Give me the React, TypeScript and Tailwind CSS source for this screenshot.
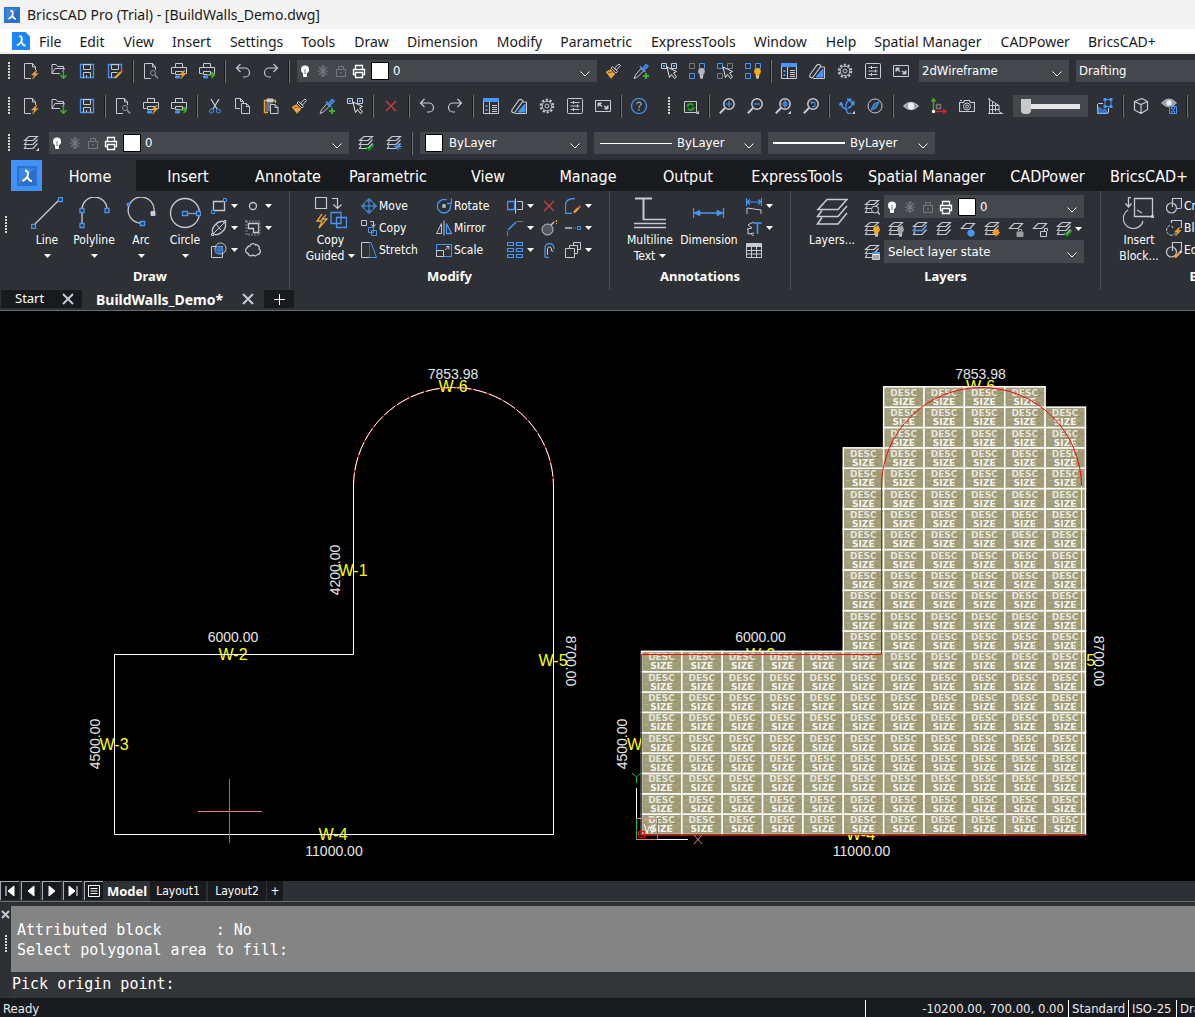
import { ReactNode } from 'react';

const G = '#c5cad3';
const B = '#4795f7';
const O = '#eaa53a';
const GREEN = '#43b02a';
const DIM = '#75797f';

type PathProps = { d: string; c?: string; f?: string; w?: number; dash?: string };

const P = ({ d, c = G, f = 'none', w = 1, dash }: PathProps) => (
  <path d={d} stroke={c} fill={f} strokeWidth={w} strokeDasharray={dash} />
);

/* Shared icon parts */
const Bolt = () => <P d="M13 7.5L8.5 12h3l-2 4 5.500-5.500h-3l2-3z" c={O} f={O} w={0.5} />;
const Page = () => <P d="M8 15.5H1.5V.5h8l3 3.5v3M9.5.5V4h3" />;
const Stack = () => (
  <>
    <P d="M6 1.5h8.5l-4.5 4H1.5z" w={1.2} />
    <P d="M3.5 6.5L1.5 9.5H10l4.5-5" w={1.2} />
    <P d="M3 10.5l-1.5 3H10l4.5-5" w={1.2} />
  </>
);
const Sheet = () => <P d="M6 2.5h8.5l-4.5 5H1.5z" w={1.2} />;
const Printer = () => (
  <>
    <P d="M4.5 5V.5h7V5M3.5 10.5h-3v-6h15v6h-3" />
    <P d="M4.5 8.5h7v3h-7z" />
    <P d="M4.5 13h4v2h-4z" c={B} f={B} />
  </>
);
const Lens = () => (
  <>
    <circle cx="10" cy="6" r="5.2" stroke={G} strokeWidth="1.5" />
    <P d="M6 10L.8 15.2" w={2} />
  </>
);
const Nodes = ({ a = B, b = B }: { a?: string; b?: string }) => (
  <>
    <P d="M.5.5h5v5h-5z" c={a} />
    <P d="M10.5.5h5v5h-5z" c={b} />
  </>
);
const Bulb = ({ c }: { c: string }) => (
  <>
    <circle cx="12.5" cy="8.5" r="3.3" fill={c} />
    <P d="M11 10h3v4h-3z" c={c} f={c} w={0.5} />
    <P d="M11.5 13h2v2.5h-2z" c={G} f={G} w={0.5} />
  </>
);
const Cursor = () => <P d="M6 4l2.500 10.500 2-3 3 4 2-1.500-3-4 3-1.500z" c="#e4e6ea" f="#2d3035" />;

const icons: Record<string, ReactNode> = {
  newDoc: <><Page /><Bolt /></>,
  open: (
    <>
      <P d="M1 10.5V1.5h4l1.5 2h6v2M1 10.5l3-5h9.5l-2 3M1 10.5h8" />
      <P d="M12.5 7v8M9.5 12l3 3.5 3-3.5" c={GREEN} w={1.3} />
    </>
  ),
  save: (
    <>
      <P d="M1.5 1.5h13v13h-13z" c={B} w={1.3} />
      <P d="M4.5 1.5h7v5h-7zM4.5 14.5v-5h7v5M7.5 12v2" />
    </>
  ),
  saveAs: (
    <>
      <P d="M8 14.5H1.5v-13h13V8" c={B} w={1.3} />
      <P d="M4.5 1.5h7v5h-7zM4.5 14.5v-5h6" />
      <P d="M8 15l6-6" c={O} w={2.3} />
      <P d="M14 9l1.5-1.5" c="#c8503c" w={2.3} />
    </>
  ),
  preview: <><Page /><circle cx="10" cy="10" r="2.5" stroke="#8d9198" /><P d="M12 12l3 3.5" c="#8d9198" w={1.5} /></>,
  printer: <><Printer /><Bolt /></>,
  publish: <><Printer /><P d="M8 12h7M12.5 9l3 3-3 3" c={GREEN} w={1.4} /></>,
  undo: <P d="M5.5 1L1.5 5l4 4M1.5 5H10a4.5 4.5 0 010 9H8" w={1.2} />,
  redo: <P d="M10.5 1l4 4-4 4M14.5 5H6a4.5 4.5 0 000 9h2" w={1.2} />,
  brush: (
    <>
      <P d="M14 1l1.500 1.500-4 4.500-2-2z" />
      <P d="M7.5 3.500l5 5-1.500 1.500-5-5z" f="#2d3035" />
      <P d="M5.5 6.5l4.500 4.5-4 4.5L1 9z" c={O} f={O} w={0.5} />
      <P d="M3 9.500l5-.5" c="#8a5a14" />
    </>
  ),
  dropper: (
    <>
      <P d="M8 5.500l2.500 2.500-6 6-3.500 1.500 1.500-3.500z" />
      <P d="M7 3.500l5.500 5.500" c={B} w={1.6} />
      <P d="M9.500 5.500l2.500-3.500q1-1.500 2.500 0t0 2.500l-3.500 2.500z" c={B} f="#3b78c9" />
      <P d="M13 10v6M10 13h6" c={GREEN} w={2} />
    </>
  ),
  selectSimilar: <><Nodes a={G} b={G} /><P d="M3 2v2M13 2v2" c={B} w={2} /><Cursor /></>,
  isolate: <><Nodes a="#75797f" b={B} /><P d="M.5 10.5h5v5h-5z" c={B} /><Bulb c="#b4b6ba" /></>,
  quickSelect: <><Nodes a={B} b="#75797f" /><P d="M.5 10.5h5v5h-5z" c={DIM} /><Cursor /></>,
  unisolate: <><Nodes /><P d="M.5 10.5h5v5h-5z" c={B} /><Bulb c="#fba81b" /></>,
  propsPanel: (
    <>
      <P d="M.5.5h15v15H.5z" />
      <P d="M.5.5h15v3H.5z" c={B} f={B} />
      <P d="M6.5 4v11" />
      <P d="M9 7.5h5M9 9.5h5M9 11.5h5M9 13.5h5" />
      <P d="M2.5 8h2M2.5 12h2" c={B} w={2} />
    </>
  ),
  sheetSet: (
    <>
      <P d="M1.500 14.500q-1.500-1.500 0-3.500l6.500-9q2-1.500 4 1l-7.500 10.500q-1.500 2-3 1z" w={1.2} />
      <P d="M12 4h3.5v11.5H4" />
      <P d="M14 6v8H7z" c={B} f={B} />
    </>
  ),
  gear: (
    <>
      <circle cx="8" cy="8" r="6.3" stroke={G} strokeWidth="2" strokeDasharray="2.2 1.75" />
      <circle cx="8" cy="8" r="4.8" stroke={G} />
      <circle cx="8" cy="8" r="2" stroke={G} />
    </>
  ),
  sliders: (
    <>
      <rect x=".5" y=".5" width="15" height="15" rx="1" stroke={G} />
      <P d="M3.5 4.5h9M3.5 8h9M3.5 11.5h9M6.5 3v3M10.5 6.5v3M6.5 10v3" />
    </>
  ),
  fullscreen: (
    <>
      <P d="M.5 2.5h15v11H.5z" />
      <P d="M3 5h3.5L3 8.5zM13 11H9.5L13 7.5z" f={G} />
      <P d="M4 6l3 2.5M12 10l-3-2" w={1.5} />
    </>
  ),
  cut: (
    <>
      <P d="M4 1l6 10M12 1L6 11" w={1.3} />
      <circle cx="4.5" cy="13" r="2" stroke={B} />
      <circle cx="11.5" cy="13" r="2" stroke={B} />
    </>
  ),
  copy: <P d="M5 10.5H.5V.5h5l3 3V5M6.5 5.5h5l3 3v7h-8zM5.5.5v3h3M11.5 5.5v3h3" />,
  paste: (
    <>
      <P d="M5 14.5H1.5v-12h11V5" c={O} w={1.4} />
      <P d="M4 1h6v3H4z" f={G} />
      <P d="M3 5h5v8H3z" c="#6d7075" f="#6d7075" />
      <P d="M7.5 6.5h4.5l3 3v6H7.5zM12 6.5v3h3" f="#2d3035" />
    </>
  ),
  erase: <P d="M3 3l10 10M13 3L3 13" c="#c9404a" w={1.3} />,
  help: (
    <>
      <circle cx="8" cy="8" r="7.5" stroke={B} strokeWidth="1.2" />
      <P d="M5.8 6.2q0-2.2 2.2-2.2t2.2 2Q10.2 7.2 8 8.5v1.3M8 11v1.5" />
    </>
  ),
  regen: (
    <>
      <P d="M1.5 3.5h12v11h-12z" />
      <circle cx="7.5" cy="9" r="3" stroke="#1fa81f" strokeWidth="2.2" strokeDasharray="7.4 2" />
      <P d="M16 13v3h-3z" f={G} w={0.5} />
    </>
  ),
  zoomIn: <><Lens /><P d="M10 3v6M7 6h6" c={B} w={1.2} /></>,
  zoomOut: <><Lens /><P d="M7 6h6" c={B} w={1.2} /></>,
  zoomExtents: <><Lens /><P d="M10 2v8M6 6h8M8 4.5h4M8 7.5h4" c={B} w={1.2} /><P d="M16 13v3h-3z" f={G} w={0.5} /></>,
  zoomPrev: <><Lens /><P d="M9 8.5h3V4.5H8M9.5 3L8 4.5 9.5 6" c={B} /></>,
  orbit: (
    <>
      <P d="M2 5q0 5 6.5 6.5M10 2q-4 3-3 9t5 4M9 10q4-1 5.5-6" c={B} w={1.3} />
      <P d="M0 7l2-3 2 3zM8 1h4v3zM12 5l3-2v4z" c={B} f={B} />
      <P d="M16 13v3h-3z" f={G} w={0.5} />
    </>
  ),
  compass: <><circle cx="8" cy="8" r="7" stroke={G} /><P d="M12 4L9 10 4 12l3-6z" c={B} f="#356db3" /></>,
  eye: <><P d="M.5 8Q8 .5 15.5 8 8 15.5.5 8z" f="#9a9ea6" /><circle cx="8" cy="8" r="3.2" fill="#eceef2" /></>,
  ucs: (
    <>
      <P d="M2.5 13V1M.5 3.5l2-3 2 3" c={GREEN} w={1.4} />
      <P d="M3 13.5h11M12 11.5l3 2-3 2" c="#d8232a" w={1.4} />
      <P d="M5.5 6.5h4v4h-4z" c={DIM} w={1.5} />
      <P d="M1.5 12.5h2v2h-2z" c="#fff" f="#fff" />
    </>
  ),
  camera: (
    <>
      <P d="M.5 4.5h4l1-2h5l1 2h4v9H.5zM1 2.5h2" w={1.2} />
      <circle cx="8" cy="8.5" r="3.5" stroke={G} />
      <circle cx="8" cy="8.5" r="1.5" stroke={G} />
    </>
  ),
  perspective: <P d="M2.5.5v15M1 .5l11 7v6M1 15.5h15M3 11.5h9.5M3 7.5h9M5.5 3v12M8.5 5v8.5M12 13.5l3 2" />,
  render: (
    <>
      <P d="M6 5.5H1.500l-1 1v9h10l1-1V10" />
      <P d="M1 9.500l3 1 2 2 2-1.5 3 4H1z" c={B} f="#356db3" />
      <P d="M8 1.5h6v7H8z" c={B} />
      <P d="M6.500 1.500h3M12.500 1.500h3M6.500 8.500h3M12.500 8.500h3" c={B} w={3} />
    </>
  ),
  box: <P d="M1.5 3.5L9 .5l5.5 3v8L8 15.5l-6.5-3.5zM1.5 3.5L8 6.5l6.5-3M8 6.5v9" w={1.2} />,
  viewSave: (
    <>
      <P d="M.5 5Q8-3 15.5 5 8 13 .5 5z" c="#aeb2b9" f="#9a9ea6" />
      <circle cx="8" cy="5" r="2.8" fill="#eceef2" />
      <P d="M8.5 8.5h7v7h-7zM10.5 8.5v2.5h3V8.5M10.5 15.5V13h3v2.5" c={B} f="#2d3035" />
    </>
  ),
  layers: <><Stack /><P d="M16 13v3h-3z" f={G} w={0.5} /></>,
  layersPlain: <Stack />,
  layersCheck: <><Stack /><P d="M8 12l3 2.5 5-5" c="#12a012" w={1.8} /></>,
  layersBlue: <><Stack /><P d="M12 7.5v8M8 11.5h8M9.5 9l5 5M14.5 9l-5 5" c={B} /></>,
  layersSearch: <><Stack /><circle cx="11" cy="10.5" r="3.5" stroke={G} fill="#2d3035" /><P d="M13.5 13l2.5 2.5" w={1.5} /></>,
  layersOn: <><Stack /><Bulb c="#fba81b" /></>,
  layersOff: <><Stack /><Bulb c="#a2a4a8" /></>,
  layersIso: <><Stack /><P d="M3.5 6.5L1.5 9.5H10l4.5-5" c={B} w={1.5} /></>,
  layersFreeze: <><Sheet /><circle cx="11" cy="12" r="3.5" fill={B} /><P d="M11 8v8M7 12h8" c={B} /></>,
  layersSun: <><Stack /><circle cx="12" cy="11.5" r="3" fill="#fba81b" /><P d="M12 7.5v8M8 11.5h8" c="#f28c1b" /></>,
  layersLock: <><Sheet /><P d="M9 11h6v4.5H9z" c="#9a9ea6" f="#9a9ea6" /><P d="M10.5 10.5V8.5h3v2" c="#9a9ea6" /></>,
  layersUnlock: <><Sheet /><P d="M8.5 10.5h6v5h-6zM12.5 10V7.5h3V10" /></>,
  layersStates: <><Stack /><P d="M8.5 8.5h7v7h-7z" f="#fff" c={G} /><P d="M8 9h8" c={B} w={2} /><P d="M9 12h6M9 14h6" c="#555" /></>,
  rect: <><P d="M2.5 3.5h11v9h-11z" w={1.3} /><P d="M.5 12.5h3v3h-3zM12.5.5h3v3h-3z" c={B} f="#2d3035" /></>,
  point: <circle cx="8" cy="8" r="3.5" stroke={G} strokeWidth="1.3" />,
  ellipse: (
    <>
      <ellipse cx="8" cy="8" rx="8" ry="5" transform="rotate(-45 8 8)" stroke={G} strokeWidth="1.3" />
      <P d="M3 13L13 3M5 4l5 6" />
      <P d="M.5 13.5h2v2h-2zM13 .5h2v2h-2z" />
    </>
  ),
  boundary: (
    <>
      <P d="M3.5 3.5h10v9h-5v-4h-5z" w={1.3} />
      <P d="M1.5 1.5h13v13h-13z" dash="1 2" w={2.5} c="#8d9198" />
    </>
  ),
  hatch: (
    <>
      <P d="M.5 4.5h11v11H.5z" />
      <circle cx="9.5" cy="6.5" r="5.5" stroke={G} />
      <circle cx="8" cy="8" r="4" stroke={B} fill="#2f5c96" />
      <P d="M5.5 9L9 5M7 11l4-5" c={B} />
    </>
  ),
  cloud: <P d="M5 4a3 3 0 015.5-1A3 3 0 0114 7a3 3 0 01-1.5 5.5A3 3 0 018 13a3 3 0 01-5-1.5A3 3 0 012 6a3 3 0 013-2z" w={1.3} />,
  move: <P d="M8 .5L15.5 8 8 15.5.5 8zM8 .5v15M.5 8h15M5.5 3h5M5.5 13h5M3 5.5v5M13 5.5v5" c={B} />,
  copySmall: (
    <>
      <P d="M.5.5h5v5h-5zM9 1.5h3.5v5M10.5 4.5l2 2.5 2-2.5" />
      <P d="M7.5 7.5h5v5h-5zM10.5 10.5h5v5h-5z" c={B} />
    </>
  ),
  stretch: <><P d="M8.5.5h-8v15h8" /><P d="M8.5.5v15" dash="1 1" c={B} /><P d="M8.5.5h1.5l5.5 15h-7" c={B} /></>,
  rotate: <><P d="M11 2A6.8 6.8 0 108 15a6.8 6.8 0 006.5-8M11 5.5h4.5v-5" c={B} w={1.3} /><P d="M7 7h2v2H7z" w={1.3} /></>,
  mirror: <><P d="M5.5 3.5v10h-5zM8 .5v15" /><P d="M10.5 3.5v10h5z" c={B} w={1.3} /></>,
  scale: <><P d="M.5 2.5h15v12H.5z" c={B} /><P d="M.5 8.5h7v6h-7zM9 8l4-3.5M10 4.5h3v3" /></>,
  trim: <><P d="M10 3.5h5.5v8H10" /><P d="M7.5 3.5h-7v8h7z" c={B} w={1.3} /><P d="M8.5.5v15" /></>,
  chamfer: <><P d="M.5 16v-5M10 1.5h6" c={DIM} /><P d="M1 10l8-8" c={B} w={1.5} /></>,
  array: <P d="M.5.5h6v3h-6zM9.5.5h6v3h-6zM.5 6.5h6v3h-6zM9.5 6.5h6v3h-6zM.5 12.5h6v3h-6zM9.5 12.5h6v3h-6z" c={B} w={1.2} />,
  explode: <><circle cx="6.5" cy="9.5" r="5.5" stroke={G} fill="#55585c" /><P d="M10 5l3-3" w={1.5} /><P d="M13 .5l1 1M15.5 0v2M15 3.5h1" c={O} /></>,
  offset: <><P d="M4 15.5V6a4.5 4.5 0 019 0v1M8 15.5H4" c={B} w={1.3} /><P d="M6.5 13V7a2 2 0 014 0v2h2" /></>,
  fillet: <><P d="M.5 15.5V7Q.5.5 10 .5M.5 15.5H7" c={B} w={1.3} /><P d="M9 14.5l4.5-4.5" c={O} w={2.3} /><P d="M13.5 10L15.5 8" c="#c8503c" w={2.3} /></>,
  lengthen: <><P d="M0 8h7" w={1.4} /><P d="M8 8h4" c={B} dash="1 1" /><P d="M12.5 6.5h3v3h-3z" c={B} /></>,
  draworder: <P d="M.5 6.5h9v9h-9zM4.5 6V3.5h8v8H10M8.5 3V.5h7v7H13" />,
  dimStyle: <><P d="M.5 0v8M15.5 0v8M1 4h14M4 1.5L1 4l3 2.5M12 1.5L15 4l-3 2.5" c={B} w={1.2} /><P d="M1 16v-6l14 2v4" /></>,
  textStyle: <><P d="M7 3h8.5M11.5 3v11" c={B} w={1.6} /><P d="M7 2L2 5l4 3M1 9l5-1M2 9v5l6-1M5 14l3 2" /></>,
  table: <><P d="M.5 1.5h15v14H.5zM.5 8.5h15M.5 12h15M5.5 5v10M10.5 5v10" /><P d="M1 1.5h14v3H1z" f={G} /></>,
  blockCreate: <><P d="M6.5 9V.5h9v10H11" w={1.2} /><circle cx="5.5" cy="10" r="5" stroke={G} strokeWidth="1.2" /><P d="M15 10v1" c={B} w={2} /></>,
  blockBolt: <><P d="M5.5 3V.5h10V8" w={1.2} /><P d="M4 5.5a5 5 0 106 7M7 8l-1-2" dash="3 1" /><Bolt /></>,
  blockEdit: <><P d="M6.5 9V.5h9v8" w={1.2} /><circle cx="5.5" cy="10" r="5" stroke={G} strokeWidth="1.2" /><P d="M9 15.5l5-5" c={O} w={2.3} /><P d="M14 10.5l1.5-1.5" c="#fff" w={2.3} /></>,
  bulb: <><circle cx="8" cy="6.5" r="4" fill="#fff" /><P d="M6.5 9h3v4.5h-3z" c="#fff" f="#fff" /><P d="M8 6v5" c="#777" /></>,
  snow: <P d="M2.5 8h11M8 2.5v11M4 4l8 8M12 4l-8 8M6.5 3L8 4.5 9.5 3M6.5 13L8 11.5 9.5 13" c={DIM} w={1.2} />,
  lock: <P d="M3.5 6.5h9v7h-9zM5.5 6V3.5h5V6M8 9v2" c={DIM} />,
  plotter: <P d="M4.5 6V2.5h7V6M4 11.5H2.5v-5h11v5H12M4.5 9.5h7v5h-7z" c="#fff" w={1.3} />,
};

/* 32px ribbon icons */
const bigIcons: Record<string, ReactNode> = {
  line: <><P d="M3 28L28 3" w={1.3} /><P d="M.5 27.5h4v4h-4zM27.5.5h4v4h-4z" c={B} w={1.3} f="#2d3035" /></>,
  polyline: <><P d="M4 27V13a12.5 12.5 0 0125-1" w={1.3} /><P d="M2 11.5h4v4H2zM2 26.5h4v4H2zM27 11.5h4v4h-4z" c={B} w={1.3} f="#2d3035" /></>,
  arc: <><P d="M17 26A13 13 0 1129 15" w={1.3} /><P d="M2.5 6.5h2v2h-2zM15.5 24.5h4v4h-4z" c={B} w={1.5} f="#2d3035" /><P d="M26 14.5h4v4h-4z" f={G} /></>,
  circle: <><circle cx="16" cy="16" r="14.5" stroke={G} strokeWidth="1.3" /><P d="M18 16.5h10" c="#8d9198" w={1.5} /><P d="M13.5 14.5h5v4h-5zM27.5 14.5h4v4h-4z" c={B} w={1.3} f="#2d3035" /></>,
  copyGuided: (
    <>
      <P d="M.5.5h11v11H.5zM17 1.5h5.5V11M18.5 7.5l4 4 4-4" w={1.2} />
      <P d="M16 15.5h10v11H16zM21.5 20.5h10v10h-10z" c={B} w={1.3} />
      <P d="M7 17L2 24h5l-3 7 8-9H7l4-4" c={O} w={1.3} />
    </>
  ),
  mtext: <><P d="M1 1.5h17M9.5 1v22" w={2} /><P d="M9 22.5h23M0 26.5h32M0 30.5h32" w={1.3} /></>,
  dimension: <><P d="M.5 11v10M30.5 11v10M1 16h29" c={B} w={1.3} /><P d="M1 16l6-3v6zM30 16l-6-3v6z" c={B} f={B} w={0.5} /></>,
  layers: (
    <>
      <P d="M11 2.5h20l-9 10H2z" w={1.6} />
      <P d="M6 13.5l-4.5 6H22L31 9" w={1.6} />
      <P d="M6 20.5L1.5 27H22l9-11" w={1.6} />
    </>
  ),
  insert: (
    <>
      <P d="M11.5 1.5h18v18h-18zM8 .5H5.5v9M2.5 6.5l3 3.5 3-3.5" w={1.3} />
      <P d="M5 13a10 10 0 1015 11M14 13l5 3" w={1.2} />
      <P d="M28.5 18.5h2v2h-2z" f={G} />
    </>
  ),
};

const Icon = ({ name }: { name: string }) => (
  <svg width="16" height="16" viewBox="0 0 16 16" fill="none" className="shrink-0" aria-hidden="true">
    {icons[name]}
  </svg>
);

const BigIcon = ({ name }: { name: string }) => (
  <svg width="32" height="32" viewBox="0 0 32 32" fill="none" className="shrink-0" aria-hidden="true">
    {bigIcons[name]}
  </svg>
);

const Caret = () => (
  <svg width="7" height="4" viewBox="0 0 7 4" className="shrink-0" aria-hidden="true">
    <path d="M0 0h7L3.5 4z" fill="#fff" />
  </svg>
);

const CloseIcon = () => (
  <svg width="12" height="12" fill="none" aria-hidden="true">
    <P d="M1 1l10 10M11 1L1 11" w={2} />
  </svg>
);

const Logo = ({ size, doc = false }: { size: number; doc?: boolean }) => (
  <svg width={size} height={size} viewBox="0 0 20 20" className="shrink-0" aria-hidden="true">
    <path d={doc ? 'M0 0h15l5 5v15H0z' : 'M0 0h20v20H0z'} fill={doc ? '#1c86ff' : '#2a72cf'} />
    {!doc && <path d="M2 2h16v16H2z" fill="#3b85de" />}
    {!doc && <path d="M2 18L18 2v16z" fill="#2a6cc6" />}
    <path d="M8 4.5q3 0 3 3.5 0 4-5.5 7M10.5 10.5q1 4.5 4.5 4.5" stroke="#fff" strokeWidth="2" fill="none" />
  </svg>
);

const Dots = () => (
  <div className="h-[18px] w-[2px] bg-[repeating-linear-gradient(#d6d8db_0_2px,transparent_2px_3px)]" />
);

const Handle = () => (
  <div className="flex w-[17px] shrink-0 justify-center">
    <Dots />
  </div>
);

const Separator = () => (
  <div className="flex w-2 shrink-0 justify-center">
    <div className="h-[23px] w-[2px] border-l border-[#1b1d20] bg-[#6d7075]" />
  </div>
);

const Tools = ({ names }: { names: string[] }) => (
  <>
    {names.map((name, i) =>
      name === '|' ? (
        <Separator key={i} />
      ) : (
        <button key={i} aria-label={name} className="flex h-7 w-7 shrink-0 items-center justify-center">
          <Icon name={name} />
        </button>
      )
    )}
  </>
);

type ComboProps = { label: string; value: string; className: string; children?: ReactNode };

const Combo = ({ label, value, className, children }: ComboProps) => (
  <div className={`relative flex shrink-0 items-center bg-[#44474c] text-[13px] text-white ${className}`}>
    {children}
    <select aria-label={label} className="h-full min-w-0 flex-1 appearance-none bg-transparent pr-6 outline-none">
      <option>{value}</option>
    </select>
    <svg width="10" height="6" viewBox="0 0 10 6" fill="none" className="pointer-events-none absolute right-[7px] top-1/2" aria-hidden="true">
      <path d="M.5.5L5 5 9.5.5" stroke="#fff" />
    </svg>
  </div>
);

const LayerCombo = ({ className }: { className: string }) => (
  <Combo label="Current layer" value="0" className={`gap-[2px] ${className}`}>
    <Icon name="bulb" />
    <Icon name="snow" />
    <Icon name="lock" />
    <Icon name="plotter" />
    <span className="mx-[2px] h-[18px] w-[18px] shrink-0 border border-black bg-white" />
  </Combo>
);

const menus = [
  'File', 'Edit', 'View', 'Insert', 'Settings', 'Tools', 'Draw', 'Dimension', 'Modify', 'Parametric',
  'ExpressTools', 'Window', 'Help', 'Spatial Manager', 'CADPower', 'BricsCAD+',
];

const ribbonTabs = [
  { name: 'Insert', width: 'w-[100px]' },
  { name: 'Annotate', width: 'w-[100px]' },
  { name: 'Parametric', width: 'w-[100px]' },
  { name: 'View', width: 'w-[100px]' },
  { name: 'Manage', width: 'w-[100px]' },
  { name: 'Output', width: 'w-[100px]' },
  { name: 'ExpressTools', width: 'w-[118px]' },
  { name: 'Spatial Manager', width: 'w-[141px]' },
  { name: 'CADPower', width: 'w-[101px]' },
  { name: 'BricsCAD+', width: 'w-[102px]' },
];

type BigButtonProps = { icon: string; lines: string[]; width: string; caret?: 'below' | 'inline' };

const BigButton = ({ icon, lines, width, caret }: BigButtonProps) => (
  <button className={`flex shrink-0 flex-col items-center pt-[2px] ${width}`}>
    <BigIcon name={icon} />
    <span className="mt-[3px] block">{lines[0]}</span>
    {lines[1] && (
      <span className="flex items-center gap-1">
        {lines[1]}
        {caret === 'inline' && <Caret />}
      </span>
    )}
    {caret === 'below' && <span className="mt-[6px]"><Caret /></span>}
  </button>
);

type SmallItem = { icon: string; text?: string; caret?: boolean };

const SmallColumn = ({ items, width }: { items: SmallItem[]; width: string }) => (
  <div className={`flex shrink-0 flex-col ${width}`}>
    {items.map(item => (
      <button key={item.icon} aria-label={item.text || item.icon} className="flex h-[22px] items-center">
        <Icon name={item.icon} />
        {item.text && <span className="ml-[2px]">{item.text}</span>}
        {item.caret && <span className="ml-1"><Caret /></span>}
      </button>
    ))}
  </div>
);

type PanelProps = { title: string; className: string; children: ReactNode };

const Panel = ({ title, className, children }: PanelProps) => (
  <section className={`flex shrink-0 flex-col border-r border-[#4b4e53] pt-1 ${className}`}>
    <div className="flex h-[73px] items-start text-[12px] leading-4">{children}</div>
    <h2 className="text-center font-['Noto_Sans'] text-[13px] font-bold leading-4">{title}</h2>
  </section>
);

function Ribbon() {
  return (
    <div className="flex shrink-0 overflow-hidden">
      <div className="flex w-[11px] shrink-0 items-center justify-center">
        <Dots />
      </div>
      <div className="min-w-0 flex-1">
        <nav className="flex h-[31px] overflow-hidden bg-[#191a1e] text-[16px] leading-[33px]">
          <button aria-label="Application menu" className="flex w-[31px] shrink-0 items-center justify-center bg-[#3f92fa]">
            <Logo size={20} />
          </button>
          <button className="mr-[2px] w-[94px] shrink-0 bg-[#2d3035] pl-[2px]">Home</button>
          {ribbonTabs.map(tab => (
            <button key={tab.name} className={`shrink-0 ${tab.width}`}>{tab.name}</button>
          ))}
        </nav>

        <div className="flex h-[99px] overflow-hidden">
          <Panel title="Draw" className="w-[279px]">
            <div className="w-[13px] shrink-0" />
            <BigButton icon="line" lines={['Line']} width="w-[46px]" caret="below" />
            <BigButton icon="polyline" lines={['Polyline']} width="w-[48px]" caret="below" />
            <BigButton icon="arc" lines={['Arc']} width="w-[46px]" caret="below" />
            <BigButton icon="circle" lines={['Circle']} width="w-[42px]" caret="below" />
            <div className="w-[5px] shrink-0" />
            <SmallColumn
              width="w-[34px]"
              items={[{ icon: 'rect', caret: true }, { icon: 'ellipse', caret: true }, { icon: 'hatch', caret: true }]}
            />
            <SmallColumn
              width="w-[34px]"
              items={[{ icon: 'point', caret: true }, { icon: 'boundary', caret: true }, { icon: 'cloud' }]}
            />
          </Panel>

          <Panel title="Modify" className="w-[320px]">
            <div className="w-[10px] shrink-0" />
            <BigButton icon="copyGuided" lines={['Copy', 'Guided']} width="w-[61px]" caret="inline" />
            <SmallColumn
              width="w-[75px]"
              items={[{ icon: 'move', text: 'Move' }, { icon: 'copySmall', text: 'Copy' }, { icon: 'stretch', text: 'Stretch' }]}
            />
            <SmallColumn
              width="w-[71px]"
              items={[{ icon: 'rotate', text: 'Rotate' }, { icon: 'mirror', text: 'Mirror' }, { icon: 'scale', text: 'Scale' }]}
            />
            <SmallColumn
              width="w-[34px]"
              items={[{ icon: 'trim', caret: true }, { icon: 'chamfer', caret: true }, { icon: 'array', caret: true }]}
            />
            <SmallColumn width="w-6" items={[{ icon: 'erase' }, { icon: 'explode' }, { icon: 'offset' }]} />
            <SmallColumn
              width="w-[34px]"
              items={[{ icon: 'fillet', caret: true }, { icon: 'lengthen', caret: true }, { icon: 'draworder', caret: true }]}
            />
          </Panel>

          <Panel title="Annotations" className="w-[181px]">
            <div className="w-[14px] shrink-0" />
            <BigButton icon="mtext" lines={['Multiline', 'Text']} width="w-[52px]" caret="inline" />
            <BigButton icon="dimension" lines={['Dimension']} width="w-[66px]" />
            <div className="w-1 shrink-0" />
            <SmallColumn
              width="w-[34px]"
              items={[{ icon: 'dimStyle', caret: true }, { icon: 'textStyle', caret: true }, { icon: 'table' }]}
            />
          </Panel>

          <Panel title="Layers" className="w-[310px]">
            <div className="w-4 shrink-0" />
            <BigButton icon="layers" lines={['Layers...']} width="w-[50px]" />
            <div className="flex flex-col pl-[7px]">
              <div className="flex h-[23px] items-center gap-1">
                <Icon name="layersSearch" />
                <LayerCombo className="h-[23px] w-[200px]" />
              </div>
              <div className="flex h-[22px] items-center gap-2">
                {['layersOn', 'layersOff', 'layersIso', 'layersPlain', 'layersFreeze', 'layersSun', 'layersLock', 'layersUnlock'].map(name => (
                  <button key={name} aria-label={name}><Icon name={name} /></button>
                ))}
                <button aria-label="layersCheck" className="flex items-center gap-[3px]"><Icon name="layersCheck" /><Caret /></button>
              </div>
              <div className="flex h-[23px] items-center gap-1">
                <Icon name="layersStates" />
                <Combo label="Layer state" value="Select layer state" className="h-[23px] w-[200px] pl-1" />
              </div>
            </div>
          </Panel>

          <Panel title="Blocks" className="w-[220px]">
            <div className="w-[12px] shrink-0" />
            <BigButton icon="insert" lines={['Insert', 'Block...']} width="w-[52px]" />
            <div className="w-px shrink-0" />
            <SmallColumn
              width="w-[120px]"
              items={[{ icon: 'blockCreate', text: 'Create' }, { icon: 'blockBolt', text: 'Blockify' }, { icon: 'blockEdit', text: 'Edit' }]}
            />
          </Panel>
        </div>
      </div>
    </div>
  );
}

/* Paved area: bottom-left corner of the grid and number of tiles per column */
const TILE_W = 40.36;
const TILE_H = 20.35;
const GRID_X = 641.5;
const GRID_Y = 834.5;
const tileColumns = [9, 9, 9, 9, 9, 19, 22, 22, 22, 22, 21];

const stoneShades = ['#8b8761', '#b3af8c', '#a09b72', '#7f7c5b', '#bcb896', '#969680'];
const speckles = Array.from({ length: 110 }, (_, i) => ({
  x: (i * 37) % 36,
  y: (i * 13 + Math.floor(i / 7) * 5) % 20,
  w: 1 + (i % 4),
  fill: stoneShades[(i * 5 + Math.floor(i / 3)) % stoneShades.length],
}));

type Label = { text: string; x: number; y: number; turn?: number };

const dimensions: Label[] = [
  { text: '7853.98', x: 453, y: 374 },
  { text: '4200.00', x: 335, y: 570, turn: -90 },
  { text: '6000.00', x: 233, y: 637 },
  { text: '4500.00', x: 95, y: 744, turn: -90 },
  { text: '11000.00', x: 334, y: 851 },
  { text: '8700.00', x: 571, y: 661, turn: 90 },
];

const wallTags: Label[] = [
  { text: 'W-6', x: 453, y: 386 },
  { text: 'W-1', x: 353, y: 570 },
  { text: 'W-2', x: 233, y: 654 },
  { text: 'W-3', x: 114, y: 744 },
  { text: 'W-4', x: 333, y: 834 },
  { text: 'W-5', x: 553, y: 660 },
];

const Labels = ({ labels, size, fill }: { labels: Label[]; size: number; fill: string }) => (
  <g fill={fill} fontSize={size} textAnchor="middle">
    {labels.map(l => (
      <text key={l.text} transform={`translate(${l.x} ${l.y}) rotate(${l.turn || 0})`} y={size * 0.35}>{l.text}</text>
    ))}
  </g>
);

function Drawing() {
  return (
    <svg width="1195" height="570" viewBox="0 311 1195 570" fill="none" className="shrink-0 font-['Liberation_Sans',sans-serif]">
      <defs>
        <g id="tile">
          <rect width={TILE_W} height={TILE_H} fill="#a19d78" />
          {speckles.map((s, i) => (
            <rect key={i} x={s.x} y={s.y} width={s.w} height="1" fill={s.fill} opacity="0.7" />
          ))}
          <rect width={TILE_W} height={TILE_H} stroke="#fff" strokeWidth="1.5" />
        </g>
      </defs>

      <Labels labels={wallTags} size={16} fill="#ff0" />
      <Labels labels={dimensions} size={14} fill="#e6e6e6" />
      <path d="M353.5 486.5a100 99 0 01200 0" stroke="#f00" />
      <path d="M353.5 486.5a100 99 0 01200 0" stroke="#fff" strokeDasharray="14 2" />
      <path d="M353.5 484v170.5h-239v180h439V484" stroke="#fff" />

      <path d="M198 811.5h64" stroke="#f08080" />
      <path d="M229.5 779v64" stroke="#10b864" />

      <g transform="translate(527.5 0)">
        <Labels labels={wallTags.filter(l => l.text !== 'W-1')} size={16} fill="#ff0" />
        <Labels labels={dimensions.filter(l => l.text !== '4200.00')} size={14} fill="#e6e6e6" />
      </g>

      {tileColumns.map((count, col) =>
        Array.from({ length: count }, (_, row) => {
          const x = GRID_X + col * TILE_W;
          const y = GRID_Y - (row + 1) * TILE_H;
          return (
            <g key={`${col}-${row}`} transform={`translate(${x} ${y})`}>
              <use href="#tile" />
              <g textAnchor="middle" fontSize="9" fontWeight="bold" fill="#fff" className="font-['DejaVu_Sans',sans-serif]">
                <text x="20" y="9" opacity="0.75">DESC</text>
                <text x="20" y="18" opacity="0.9">SIZE</text>
              </g>
            </g>
          );
        })
      )}

      <path d="M881.5 484v170.5h-240v180h444" stroke="#f00" />
      <path d="M881.5 486.5a100 99 0 01200 0" stroke="#f00" />
      <path d="M1081.5 486v348" stroke="#fff" />

      {/* UCS icon */}
      <path d="M636.5 788v51.5H688" stroke="#fff" />
      <path d="M636.5 818v21M657.5 818v21" stroke="#10b864" />
      <path d="M636 818.5h21M636 839.5h21" stroke="#f08080" />
      <path d="M638.5 831.5h6v6h-6z" stroke="#f00" />
      <path d="M694 835l8 9M702 835l-8 9" stroke="#f08080" />
      <path d="M632 773l4.5 4 4.5-4M636.5 777v6" stroke="#10b864" />
      <path d="M644 824l3 9 2.5-7 2.5 7 3-9" stroke="#fff" />
    </svg>
  );
}

const layoutNav = [
  'M5 4v10M13 4l-6 5 6 5z',
  'M12 4l-6 5 6 5z',
  'M6 4l6 5-6 5z',
  'M13 4v10M5 4l6 5-6 5z',
];

export default function App() {
  return (
    <div className="flex min-h-screen flex-col overflow-hidden whitespace-nowrap bg-[#2d3035] font-['DejaVu_Sans_Condensed','Noto_Sans',sans-serif] text-white">
      <header className="shrink-0 font-['Noto_Sans',sans-serif] text-[14px] text-[#1a1a1a]">
        <div className="flex h-[29px] items-center gap-[7px] bg-[#f3f3f3] pl-1">
          <Logo size={16} />
          <h1>BricsCAD Pro (Trial) - [BuildWalls_Demo.dwg]</h1>
        </div>
        <nav className="flex h-[25px] items-center overflow-hidden border-b-2 border-[#f0f0f0] bg-white pl-3 pt-px">
          <Logo size={18} doc />
          {menus.map(menu => (
            <button key={menu} className="ml-px shrink-0 px-[9px] first-of-type:ml-0 odd:ml-0">{menu}</button>
          ))}
        </nav>
      </header>

      {/* Toolbars */}
      <div className="flex h-[34px] shrink-0 items-center overflow-hidden">
        <Handle />
        <Tools names={['newDoc', 'open', 'save', 'saveAs', '|', 'preview', 'printer', 'publish', '|', 'undo', 'redo', '|']} />
        <LayerCombo className="ml-1 mr-[2px] h-[22px] w-[300px]" />
        <Tools names={['brush', 'dropper', 'selectSimilar', 'isolate', 'quickSelect', 'unisolate', '|', 'propsPanel', 'sheetSet', 'gear', 'sliders', 'fullscreen']} />
        <Combo label="Visual style" value="2dWireframe" className="ml-1 h-[22px] w-[150px] pl-[3px]" />
        <Combo label="Workspace" value="Drafting" className="ml-[7px] h-[22px] w-[150px] pl-[3px]" />
      </div>
      <div className="flex h-[36px] shrink-0 items-center overflow-hidden">
        <Handle />
        <Tools
          names={[
            'newDoc', 'open', 'save', '|', 'preview', 'printer', 'publish', '|', 'cut', 'copy', 'paste', 'brush', 'dropper',
            'selectSimilar', '|', 'erase', '|', 'undo', 'redo', '|', 'propsPanel', 'sheetSet', 'gear', 'sliders', 'fullscreen', '|', 'help',
          ]}
        />
        <div className="w-[7px] shrink-0" />
        <Handle />
        <Tools
          names={[
            'regen', '|', 'zoomIn', 'zoomOut', 'zoomExtents', 'zoomPrev', '|', 'orbit', 'compass', '|', 'eye', 'ucs', 'camera', 'perspective',
          ]}
        />
        <div className="ml-1 mr-[3px] flex h-[22px] w-[75px] shrink-0 items-center bg-[#44474c] px-2">
          <input
            type="range"
            aria-label="Lens"
            defaultValue={0}
            className="h-[5px] w-full appearance-none bg-[#e6e6e6] [&::-webkit-slider-thumb]:h-[15px] [&::-webkit-slider-thumb]:w-[10px] [&::-webkit-slider-thumb]:appearance-none [&::-webkit-slider-thumb]:rounded-b-[4px] [&::-webkit-slider-thumb]:bg-[#c9c9c9]"
          />
        </div>
        <Tools names={['render', '|', 'box', 'viewSave', '|']} />
      </div>
      <div className="flex h-[36px] shrink-0 items-center overflow-hidden pt-[2px]">
        <Handle />
        <Tools names={['layers']} />
        <LayerCombo className="ml-1 mr-[3px] h-[22px] w-[300px]" />
        <Tools names={['layersCheck', 'layersBlue', '|']} />
        <Combo label="Colour" value="ByLayer" className="ml-1 h-[22px] w-[167px] gap-[6px] pl-[5px]">
          <span className="h-[18px] w-[18px] shrink-0 border border-black bg-white" />
        </Combo>
        <Combo label="Linetype" value="ByLayer" className="ml-[7px] h-[22px] w-[167px] gap-[5px] pl-[6px]">
          <span className="h-px w-[72px] shrink-0 bg-white" />
        </Combo>
        <Combo label="Lineweight" value="ByLayer" className="ml-[7px] h-[22px] w-[167px] gap-[5px] pl-[5px]">
          <span className="h-[2px] w-[72px] shrink-0 bg-white" />
        </Combo>
      </div>

      <Ribbon />

      {/* Document tabs */}
      <div className="flex h-[21px] shrink-0 items-stretch border-b border-[#6a6c6e] pb-[2px] pl-[1px] font-['Noto_Sans',sans-serif] text-[13px]">
        <div className="mr-[2px] flex w-[81px] items-center justify-between bg-[#191a1e] pl-[14px] pr-2">
          <a href="#start">Start</a>
          <button aria-label="Close Start"><CloseIcon /></button>
        </div>
        <div className="mr-px flex w-[179px] items-center justify-between pl-3 pr-[9px] text-[14px] font-bold">
          <a href="#buildwalls">BuildWalls_Demo*</a>
          <button aria-label="Close BuildWalls_Demo"><CloseIcon /></button>
        </div>
        <button aria-label="New drawing" className="flex w-[30px] items-center justify-center bg-[#191a1e]">
          <svg width="11" height="11"><P d="M5.5 0v11M0 5.5h11" c="#fff" /></svg>
        </button>
      </div>

      <main className="flex min-h-[570px] flex-1 overflow-hidden bg-black">
        <Drawing />
      </main>

      {/* Layout tabs */}
      <div className="flex h-[25px] shrink-0 items-start border-b-4 border-[#2d3035] text-[12px]">
        <div className="flex h-[21px] flex-1 border-b border-[#6a6c6e]">
          {layoutNav.map(d => (
            <button key={d} aria-label="Scroll layouts" className="mr-[2px] h-[19px] w-[19px] border-l border-t border-[#a3abb8] bg-[#191a1e]">
              <svg width="18" height="18"><path d={d} fill="#fff" stroke="#fff" /></svg>
            </button>
          ))}
          <button aria-label="Layout list" className="mr-[2px] h-[19px] w-[19px] border-l border-t border-[#a3abb8] bg-[#191a1e]">
            <svg width="18" height="18" fill="none"><P d="M3.5 3.5h11v11h-11zM5.5 6.5h7M5.5 9h7M5.5 11.5h7" c="#fff" /></svg>
          </button>
          <button className="w-[44px] font-['Noto_Sans'] text-[13px] font-bold leading-[19px]">Model</button>
          <button className="ml-px h-5 w-[56px] bg-[#191a1e]">Layout1</button>
          <button className="ml-[2px] h-5 w-[58px] bg-[#191a1e]">Layout2</button>
          <button className="ml-px h-5 w-[16px] bg-[#191a1e]">+</button>
        </div>
      </div>

      {/* Command line */}
      <div className="flex shrink-0 font-['DejaVu_Sans_Mono',monospace] text-[15px] leading-5">
        <div className="flex w-[11px] shrink-0 flex-col items-center">
          <button aria-label="Close command line" className="mt-1"><svg width="9" height="9" fill="none"><P d="M1 1l7 7M8 1L1 8" w={2} /></svg></button>
          <div className="mt-4"><Dots /></div>
        </div>
        <div className="min-w-0 flex-1">
          <pre className="h-[66px] bg-[#848484] pl-[6px] pt-[14px] font-['DejaVu_Sans_Mono',monospace]">
            {'Attributed block      : No\nSelect polygonal area to fill:'}
          </pre>
          <input
            aria-label="Command"
            defaultValue="Pick origin point: "
            className="block h-[26px] w-full bg-[#333639] pb-[2px] pl-px outline-none"
          />
        </div>
      </div>

      <footer className="flex h-[19px] shrink-0 items-stretch overflow-hidden bg-[#191a1e] pt-[2px] text-[13px] leading-[18px] text-[#e8eaec]">
        <span className="flex-1 pl-[3px]">Ready</span>
        <span className="w-[203px] border-l border-white pr-1 text-right">-10200.00, 700.00, 0.00</span>
        <span className="w-[60px] border-l border-white pl-[3px]">Standard</span>
        <span className="w-[48px] border-l border-white pl-[3px]">ISO-25</span>
        <span className="w-[19px] overflow-hidden border-l border-white pl-[3px]">Drafting</span>
      </footer>
    </div>
  );
}
